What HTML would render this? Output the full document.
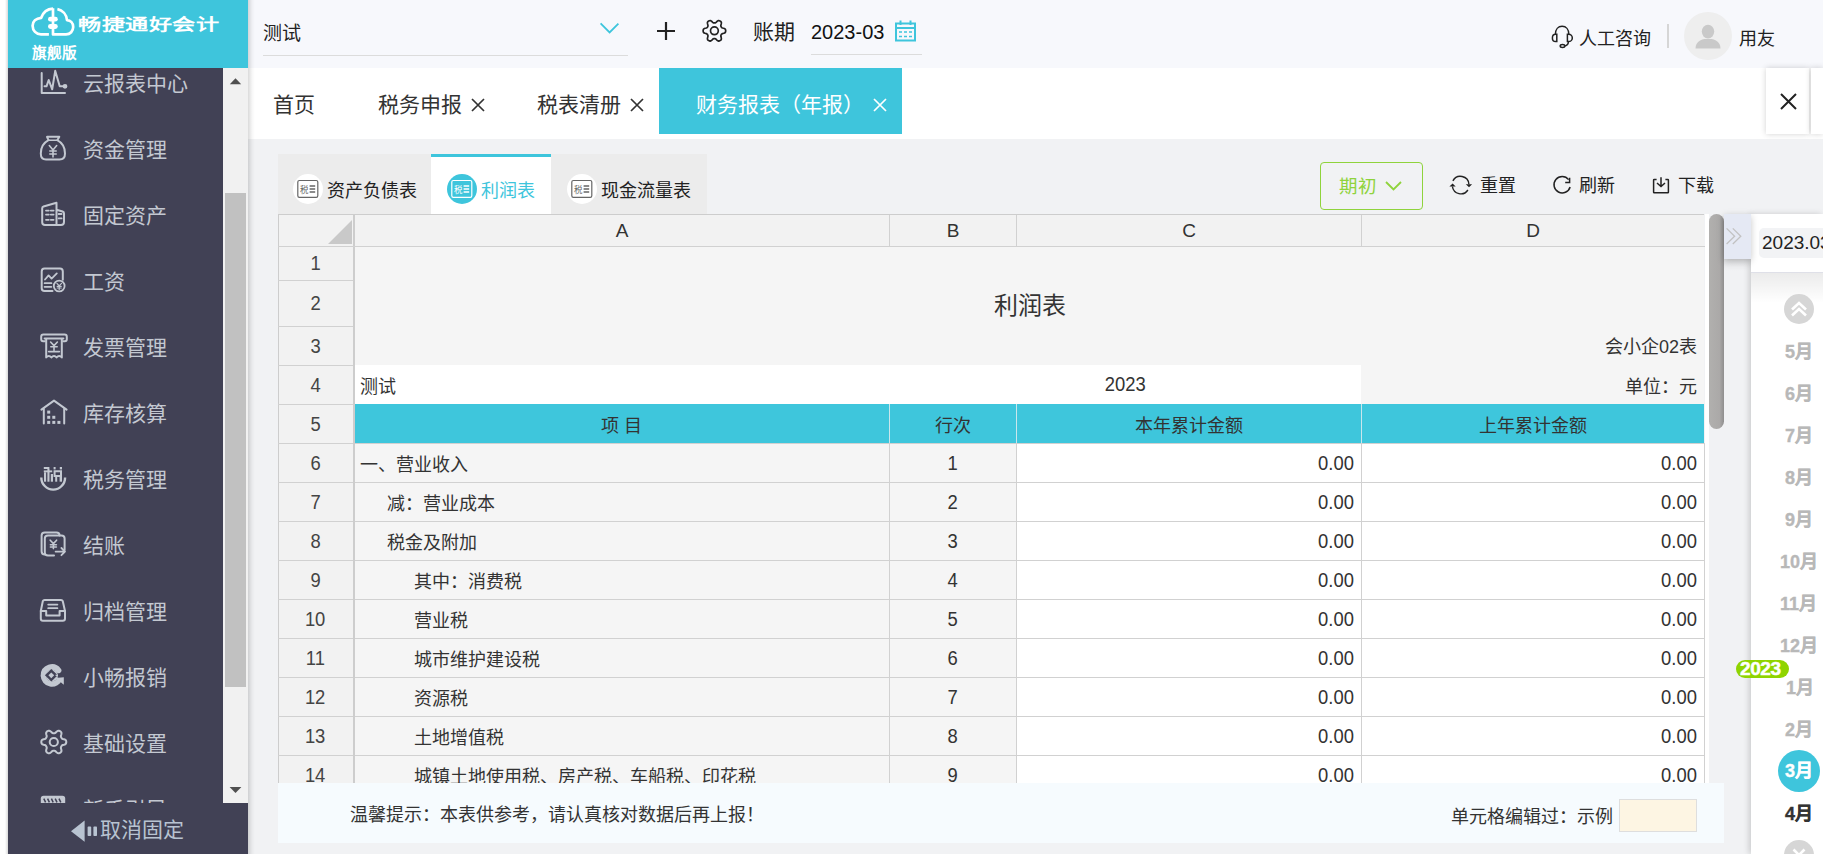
<!DOCTYPE html>
<html lang="zh-CN"><head><meta charset="utf-8">
<style>
*{box-sizing:border-box;margin:0;padding:0}
html,body{width:1823px;height:854px;overflow:hidden;background:#fff;font-family:"Liberation Sans",sans-serif;color:#333}
.abs,.g,.t,.ch,.rn,.hl,.vl{position:absolute}
.t{white-space:nowrap;color:#333}
.num{display:inline-block;font-size:20px;transform:scaleX(.92);position:relative;top:-2px}
.ch{text-align:center;line-height:32px;font-size:19px;color:#333}
.rn{left:278px;width:75px;text-align:center;font-size:18px;color:#444}
.hl{height:1px;background:#d1d1d1}
.vl{width:1px;background:#d1d1d1}
#strip{left:0;top:0;width:8px;height:854px;background:linear-gradient(90deg,#fff 0,#fff 5px,#e6e6e6 7px,#d9d9d9 8px)}
#logo{left:8px;top:0;width:240px;height:68px;background:#3ec5dc}
#side{left:8px;top:68px;width:240px;height:786px;background:#414155}
#sbtrack{left:223px;top:68px;width:25px;height:735px;background:#f1f1f1}
#sbthumb{left:225px;top:193px;width:21px;height:494px;background:#c1c1c1}
.mt{position:absolute;left:83px;font-size:21px;color:#c3c8d1;white-space:nowrap;line-height:32px}
#topbar{left:248px;top:0;width:1575px;height:68px;background:#f7f8fc}
#tabbar{left:248px;top:68px;width:1575px;height:71px;background:#fff}
#content{left:248px;top:139px;width:1575px;height:715px;background:#f1f2f4}
.mo{position:absolute;font-size:18px;font-weight:bold;line-height:28px;color:#b8b8b8;white-space:nowrap;-webkit-text-stroke:0.35px currentColor}
.tab{position:absolute;top:90px;line-height:30px;font-size:21px;color:#333;white-space:nowrap}
</style></head><body>
<div id="strip" class="abs"></div>
<div id="topbar" class="abs"></div>
<div id="tabbar" class="abs"></div>
<div id="content" class="abs"></div>
<div class="abs" style="left:248px;top:0;width:7px;height:854px;background:linear-gradient(90deg,rgba(0,0,0,0.14),rgba(0,0,0,0.03) 60%,rgba(0,0,0,0))"></div>

<!-- logo -->
<div id="logo" class="abs"></div>
<svg class="abs" style="left:0;top:0" width="248" height="68">
 <g fill="none" stroke="#fff" stroke-width="2.7" stroke-linejoin="round">
  <path d="M48.9 34.4 H41 C36.2 34.4 32.6 30.4 32.6 25.8 C32.6 21.4 36 18.2 41.2 17.8 C43.2 12 47.6 8.9 53 8.6"/>
  <path d="M53 8.2 V34.4 H66 C70.2 34.4 73.2 31 73.2 27 C73.2 23.2 70.6 20.5 67 20.2 C66.4 14.4 62.6 10.2 57.4 9.2"/>
 </g>
 <rect x="48" y="16.7" width="9.8" height="4.9" rx="2.45" fill="#fff"/>
 <rect x="48" y="24" width="9.8" height="4.9" rx="2.45" fill="#fff"/>
 <text x="78.4" y="44.4" fill="#fff" font-size="23" font-weight="bold" textLength="141" lengthAdjust="spacingAndGlyphs" transform="scale(1,0.68)" style="font-family:'Liberation Sans',sans-serif">畅捷通好会计</text>
 <text x="31.6" y="57.6" fill="#fff" font-size="14.6" font-weight="bold" style="font-family:'Liberation Sans',sans-serif">旗舰版</text>
</svg>

<!-- sidebar -->
<div id="side" class="abs"></div>
<svg class="abs" style="left:0;top:68px" width="223" height="735" viewBox="0 68 223 735">
 <g fill="none" stroke="#c3c8d1" stroke-width="2" stroke-linecap="round" stroke-linejoin="round">
  <!-- chart -->
  <path d="M41.7 73 V93 H65"/>
  <path d="M44.5 86.3 H46.5 L48.7 80 L52.2 89.3 L55.2 70.8 L59.7 86.3 H63.5"/>
  <circle cx="65" cy="86.3" r="1.4" fill="#c3c8d1"/>
  <!-- money bag -->
  <path d="M47 136.8 H59.3 L57.3 140.2 C62.5 143 65 148.5 65 153.5 C65 157.5 63 159.5 59.5 159.5 H46 C42.5 159.5 40.8 157.5 40.8 153.5 C40.8 148.5 43.3 143 48.5 140.2 Z"/>
  <path d="M48.5 140.2 H57.3" stroke-width="1.6"/>
  <path d="M49.3 145.5 L53 150 L56.7 145.5 M53 150 V157 M49.8 151 H56.2 M49.8 154 H56.2" stroke-width="1.6"/>
  <!-- building -->
  <path d="M56.5 202.8 L43.5 206.5 Q42.2 206.9 42.2 208.2 V222.2 Q42.2 225 45 225 H61 Q64 225 64 222 V213.5 Q64 212 62.6 211.5 L56.5 209.8 M56.5 202.8 V225"/>
  <path d="M46 210.6 H48.8 M50.8 210.6 H53.6 M46 214.6 H48.8 M50.8 214.6 H53.6 M46 219.8 H48.8 M50.8 219.8 H53.6 M58.6 214 H61.6 M58.6 218.4 H61.6" stroke-width="1.8"/>
  <!-- salary doc -->
  <path d="M52.5 291 H44.5 Q41.7 291 41.7 288.2 V271.4 Q41.7 268.6 44.5 268.6 H60 Q62.8 268.6 62.8 271.4 V279.8"/>
  <path d="M45 279.5 L48.6 275.4 L51.6 278.6 L56.8 273.4" stroke-width="1.8"/>
  <path d="M44.6 283.2 H51.4 M44.6 286.8 H51.4" stroke-width="1.8"/>
  <circle cx="59.2" cy="286" r="5.4" stroke-width="1.8"/>
  <path d="M56.9 283.4 L59.2 285.8 L61.5 283.4 M59.2 285.8 V289.4 M57.2 286.4 H61.2 M57.2 288 H61.2" stroke-width="1.2"/>
  <!-- invoice -->
  <path d="M44.8 341.2 H43.2 Q41.2 341.2 41.2 339.2 V336.8 Q41.2 334.6 43.4 334.6 H64.6 Q66.8 334.6 66.8 336.8 V339.2 Q66.8 341.2 64.8 341.2 H63.2"/>
  <path d="M44.6 338.4 H63.4 M46.2 338.4 V357.4 Q48.8 354.4 51.4 357.4 Q54 354.4 56.6 357.4 Q59.2 354.4 61.8 357.4 V338.4"/>
  <path d="M50.6 342 L54 345.6 L57.4 342 M54 345.6 V350.2 M50.8 346.8 H57.2 M48.6 351.6 H59.4" stroke-width="1.6"/>
  <!-- house -->
  <path d="M41.4 409.6 L54 400.6 L66.6 409.6 M43.8 408 V423.4 M64.2 408 V423.4"/>
  <g fill="#c3c8d1" stroke="none">
   <rect x="47.2" y="410.6" width="3" height="3"/><rect x="47.2" y="415.8" width="3" height="3"/><rect x="52.3" y="415.8" width="3" height="3"/>
   <rect x="47.2" y="420.9" width="3" height="3"/><rect x="52.3" y="420.9" width="3" height="3"/><rect x="57.4" y="420.9" width="3" height="3"/>
  </g>
  <!-- tax -->
  <path d="M41.3 477.4 A11.9 12.2 0 0 0 65.1 477.4" stroke-width="2.4" stroke-linecap="butt"/>
  <!-- checkout -->
  <path d="M44.8 554.4 Q41.6 554.4 41.6 551.2 V535.4 Q41.6 532.4 44.8 532.4 H56.4 Q59.6 532.4 59.6 535.4"/>
  <path d="M64.6 550 V538.6 Q64.6 535.6 61.4 535.6 H48 Q44.8 535.6 44.8 538.6 V552.4 Q44.8 555.4 48 555.4 H54"/>
  <path d="M50.2 540.2 L53.4 543.6 L56.6 540.2 M53.4 543.6 V548.6 M50.4 544.8 H56.4 M50.4 547 H56.4" stroke-width="1.6"/>
  <path d="M55.6 551.6 H65 M61.4 548 L65 551.6 L61.4 555.2" stroke-width="1.8"/>
  <!-- archive -->
  <path d="M44.6 600 H61 Q62.3 600 62.8 601.2 L65 611 V618.6 Q65 620.8 62.8 620.8 H42.8 Q40.8 620.8 40.8 618.6 V611 L42.8 601.2 Q43.3 600 44.6 600 Z"/>
  <path d="M40.8 611 H46.2 V615.4 H59.6 V611 H65"/>
  <path d="M48.2 604.6 H57.4 M48.2 608.2 H57.4" stroke-width="1.8"/>
  <!-- small C logo -->
  <path d="M58.6 670.4 A8.4 8.4 0 0 0 43.5 675.5" stroke-width="5.6" stroke-linecap="round"/>
  <path d="M43.5 675.5 A8.4 8.4 0 0 0 59.8 678.4" stroke-width="5.6" stroke-linecap="butt"/>
  <g stroke="none">
   <circle cx="51.9" cy="675.5" r="6" fill="#c3c8d1"/>
   <path d="M51.3 669.1 L57.7 675.3 L51.3 681.5 L44.9 675.3 Z" fill="#414155"/>
   <path d="M51.3 672.4 L54.2 675.3 L51.3 678.2 L48.4 675.3 Z" fill="#c3c8d1"/>
   <path d="M55.6 678 L63.8 677.2 L63.8 684.8 Z" fill="#c3c8d1"/>
   <rect x="55.6" y="674.6" width="2.4" height="1.4" fill="#c3c8d1"/>
  </g>
  <!-- gear -->
  <path d="M66.3 742.0 L66.2 742.8 L66.0 743.6 L65.3 744.3 L64.0 744.7 L62.8 745.0 L62.0 745.4 L61.6 745.9 L61.3 746.4 L61.1 746.9 L60.9 747.4 L60.9 748.2 L61.3 749.5 L61.5 750.8 L61.3 751.7 L60.7 752.4 L60.0 752.8 L59.3 753.2 L58.5 753.3 L57.6 753.1 L56.5 752.2 L55.6 751.3 L55.0 750.9 L54.4 750.7 L53.8 750.7 L53.2 750.7 L52.6 750.9 L52.0 751.3 L51.1 752.2 L50.0 753.1 L49.1 753.3 L48.3 753.2 L47.5 752.8 L46.9 752.4 L46.3 751.7 L46.1 750.8 L46.3 749.5 L46.7 748.2 L46.7 747.4 L46.5 746.9 L46.3 746.4 L46.0 745.9 L45.6 745.4 L44.8 745.0 L43.6 744.7 L42.3 744.3 L41.6 743.6 L41.4 742.8 L41.3 742.0 L41.4 741.2 L41.6 740.4 L42.3 739.7 L43.6 739.3 L44.8 739.0 L45.6 738.6 L46.0 738.1 L46.3 737.6 L46.5 737.1 L46.7 736.6 L46.7 735.8 L46.3 734.5 L46.1 733.2 L46.3 732.3 L46.9 731.6 L47.5 731.2 L48.3 730.8 L49.1 730.7 L50.0 730.9 L51.1 731.8 L52.0 732.7 L52.6 733.1 L53.2 733.3 L53.8 733.3 L54.4 733.3 L55.0 733.1 L55.6 732.7 L56.5 731.8 L57.6 730.9 L58.5 730.7 L59.3 730.8 L60.0 731.2 L60.7 731.6 L61.3 732.3 L61.5 733.2 L61.3 734.5 L60.9 735.8 L60.9 736.6 L61.1 737.1 L61.3 737.6 L61.6 738.1 L62.0 738.6 L62.8 739.0 L64.0 739.3 L65.3 739.7 L66.0 740.4 L66.2 741.2Z" stroke-width="2"/>
  <circle cx="53.8" cy="742" r="4.1" stroke-width="2"/>
  <!-- guide (clipped) -->
  <path d="M40.8 803 V798.6 Q40.8 795.8 43.6 795.8 H62.4 Q65.2 795.8 65.2 798.6 V803 Z" fill="#c3c8d1" stroke="none"/>
  <path d="M43.8 798.6 L45.6 802.4 M47.6 798.6 L49.4 802.4 M51.4 798.6 L53.2 802.4 M55.2 798.6 L57 802.4 M59 798.6 L60.8 802.4" stroke="#414155" stroke-width="1.5" stroke-linecap="butt"/>
 </g>
 <g fill="#c3c8d1">
  <rect x="43.8" y="467" width="5.6" height="2"/>
  <rect x="43.8" y="470.4" width="8.4" height="1.9"/>
  <rect x="44" y="472.3" width="2.1" height="9.4"/>
  <rect x="47.4" y="469" width="2.1" height="12.7"/>
  <rect x="50.8" y="474" width="2.2" height="7.7"/>
  <rect x="53.6" y="467" width="2" height="2.4"/>
  <rect x="59.8" y="467" width="2.2" height="2.4"/>
  <path d="M53.6 470.2 H62 V477 H53.6 Z M55.6 472.2 V475 H60 V472.2 Z" fill-rule="evenodd"/>
  <rect x="55.2" y="477" width="2" height="4.7"/>
  <rect x="59.6" y="477" width="2.4" height="4.7"/>
 </g>
</svg>
<div class="mt" style="top:68px;height:735px;left:0;width:223px;overflow:hidden">
 <div class="mt" style="top:0px">云报表中心</div>
 <div class="mt" style="top:66px">资金管理</div>
 <div class="mt" style="top:132px">固定资产</div>
 <div class="mt" style="top:198px">工资</div>
 <div class="mt" style="top:264px">发票管理</div>
 <div class="mt" style="top:330px">库存核算</div>
 <div class="mt" style="top:396px">税务管理</div>
 <div class="mt" style="top:462px">结账</div>
 <div class="mt" style="top:528px">归档管理</div>
 <div class="mt" style="top:594px">小畅报销</div>
 <div class="mt" style="top:660px">基础设置</div>
 <div class="mt" style="top:726px">新手引导</div>
</div>
<div id="sbtrack" class="abs"></div>
<div id="sbthumb" class="abs"></div>
<svg class="abs" style="left:223px;top:68px" width="25" height="735">
 <path d="M6.8 16.2 L12.5 10.2 L18.2 16.2Z" fill="#505050"/>
 <path d="M6.6 718.9 L12.5 725 L18.4 718.9Z" fill="#505050"/>
</svg>
<!-- unpin -->
<svg class="abs" style="left:0;top:803px" width="248" height="51">
 <path d="M71 28.2 L84.6 17.6 V38.8 Z" fill="#b8c3d1"/>
 <rect x="87.6" y="23.6" width="3.6" height="9.4" rx="0.8" fill="#b8c3d1"/>
 <rect x="93.4" y="23.6" width="3.6" height="9.4" rx="0.8" fill="#b8c3d1"/>
</svg>
<div class="t" style="left:100px;top:815px;font-size:21px;line-height:30px;color:#b8c3d1">取消固定</div>

<!-- top bar -->
<div class="t" style="left:263px;top:18.5px;font-size:19px;line-height:30px;color:#222">测试</div>
<div class="abs" style="left:263px;top:55px;width:365px;height:1px;background:#dcdcdc"></div>
<svg class="abs" style="left:596px;top:18px" width="28" height="20"><path d="M4.6 5.4 L13.6 14.4 L22.4 5.6" fill="none" stroke="#3ec5dc" stroke-width="1.8"/></svg>
<svg class="abs" style="left:650px;top:15px" width="32" height="32"><path d="M16 7 V25 M7 16 H25" stroke="#222" stroke-width="2.2"/></svg>
<svg class="abs" style="left:698px;top:15px" width="32" height="32">
 <path d="M27.7 15.8 L27.6 16.5 L27.4 17.2 L26.8 17.9 L25.7 18.3 L24.5 18.6 L23.9 18.9 L23.5 19.3 L23.2 19.8 L23.0 20.2 L22.8 20.7 L22.9 21.5 L23.2 22.6 L23.4 23.8 L23.2 24.6 L22.7 25.2 L22.0 25.6 L21.4 25.9 L20.6 26.1 L19.8 25.8 L18.9 25.1 L18.1 24.2 L17.5 23.8 L16.9 23.7 L16.4 23.7 L15.9 23.7 L15.3 23.8 L14.7 24.2 L13.9 25.1 L13.0 25.8 L12.2 26.1 L11.4 25.9 L10.8 25.6 L10.1 25.2 L9.6 24.6 L9.4 23.8 L9.6 22.6 L9.9 21.5 L10.0 20.7 L9.8 20.2 L9.6 19.8 L9.3 19.3 L8.9 18.9 L8.3 18.6 L7.1 18.3 L6.0 17.9 L5.4 17.2 L5.2 16.5 L5.1 15.8 L5.2 15.1 L5.4 14.4 L6.0 13.7 L7.1 13.3 L8.3 13.0 L8.9 12.7 L9.3 12.3 L9.6 11.9 L9.8 11.4 L10.0 10.9 L9.9 10.1 L9.6 9.0 L9.4 7.8 L9.6 7.0 L10.1 6.4 L10.7 6.0 L11.4 5.7 L12.2 5.5 L13.0 5.8 L13.9 6.5 L14.7 7.4 L15.3 7.8 L15.9 7.9 L16.4 7.9 L16.9 7.9 L17.5 7.8 L18.1 7.4 L18.9 6.5 L19.8 5.8 L20.6 5.5 L21.4 5.7 L22.0 6.0 L22.7 6.4 L23.2 7.0 L23.4 7.8 L23.2 9.0 L22.9 10.1 L22.8 10.9 L23.0 11.4 L23.2 11.8 L23.5 12.3 L23.9 12.7 L24.5 13.0 L25.7 13.3 L26.8 13.7 L27.4 14.4 L27.6 15.1Z" fill="none" stroke="#222" stroke-width="1.7" stroke-linejoin="round"/>
 <circle cx="16.4" cy="15.8" r="3.9" fill="none" stroke="#222" stroke-width="1.7"/>
</svg>
<div class="t" style="left:753px;top:17px;font-size:21px;line-height:30px;color:#222">账期</div>
<div class="t" style="left:811px;top:17px;font-size:20px;line-height:30px;color:#111">2023-03</div>
<div class="abs" style="left:811px;top:54px;width:111px;height:1px;background:#dcdcdc"></div>
<svg class="abs" style="left:892px;top:17px" width="28" height="28">
 <g fill="none" stroke="#3ec5dc" stroke-width="2">
  <rect x="4" y="6.5" width="19" height="17" />
  <path d="M4 11 H23 M8.5 3.5 V8 M18.5 3.5 V8"/>
  <path d="M7 15 H10 M12 15 H15 M17 15 H20 M7 19.5 H10 M12 19.5 H15 M17 19.5 H20" stroke-width="1.6"/>
 </g>
</svg>
<svg class="abs" style="left:1548px;top:22px" width="28" height="30">
 <g fill="none" stroke="#222" stroke-width="1.5">
  <path d="M7.4 12.3 C7.4 7.4 10.2 4.3 14.1 4.3 C18 4.3 20.8 7.4 20.8 12.3"/>
  <path d="M8.8 12.3 H7.6 C5.6 12.3 4.4 14 4.4 15.9 C4.4 17.8 5.6 19.5 7.6 19.5 H8.8 Z"/>
  <path d="M19.4 12.3 H20.6 C22.6 12.3 24.3 14 24.3 15.9 C24.3 17.8 22.6 19.5 20.6 19.5 H19.4 Z"/>
  <path d="M20.4 19.6 C20.4 22 19 23.6 16.8 23.9"/>
  <ellipse cx="14.5" cy="23.9" rx="2.3" ry="1.5"/>
 </g>
</svg>
<div class="t" style="left:1579px;top:23.5px;font-size:18px;line-height:30px;color:#222">人工咨询</div>
<div class="abs" style="left:1667px;top:24px;width:2px;height:24px;background:#d6d6d6"></div>
<div class="abs" style="left:1684px;top:12px;width:48px;height:48px;border-radius:50%;background:#eeeeee"></div>
<svg class="abs" style="left:1684px;top:12px" width="48" height="48">
 <ellipse cx="24" cy="19.6" rx="6.2" ry="6.8" fill="#c9c9c9"/>
 <path d="M11.5 36.5 C11.5 30 17 27.4 20.5 27 H27.5 C31 27.4 36.5 30 36.5 36.5 Z" fill="#c9c9c9"/>
</svg>
<div class="t" style="left:1739px;top:23.5px;font-size:18px;line-height:30px;color:#222">用友</div>

<!-- tabs -->
<div class="tab" style="left:273px">首页</div>
<div class="tab" style="left:378px">税务申报</div>
<svg class="abs" style="left:470px;top:97px" width="16" height="16"><path d="M2 2 L14 14 M14 2 L2 14" stroke="#333" stroke-width="1.7"/></svg>
<div class="tab" style="left:537px">税表清册</div>
<svg class="abs" style="left:629px;top:97px" width="16" height="16"><path d="M2 2 L14 14 M14 2 L2 14" stroke="#333" stroke-width="1.7"/></svg>
<div class="abs" style="left:659px;top:68px;width:243px;height:66px;background:#3ec5dc"></div>
<div class="tab" style="left:696px;color:#fff">财务报表（年报）</div>
<svg class="abs" style="left:872px;top:97px" width="16" height="16"><path d="M2 2 L14 14 M14 2 L2 14" stroke="#fff" stroke-width="1.7"/></svg>
<div class="abs" style="left:1766px;top:68px;width:43px;height:66px;background:#fff;box-shadow:0 0 6px rgba(0,0,0,0.18)"></div>
<div class="abs" style="left:1811px;top:68px;width:12px;height:66px;background:#fff;box-shadow:0 0 6px rgba(0,0,0,0.18)"></div>
<svg class="abs" style="left:1777px;top:90px" width="24" height="24"><path d="M4 4 L19 19 M19 4 L4 19" stroke="#222" stroke-width="2"/></svg>

<!-- sheet tabs -->
<div class="abs" style="left:278px;top:154px;width:429px;height:60px;background:#ececec"></div>
<div class="abs" style="left:431px;top:154px;width:120px;height:60px;background:#fff;border-top:3px solid #3ec5dc"></div>
<svg class="abs" style="left:292px;top:173px" width="32" height="32">
 <circle cx="16" cy="16" r="15" fill="#fff"/>
 <rect x="5.8" y="7.5" width="20" height="16.8" rx="1.6" fill="none" stroke="#666" stroke-width="1.2"/>
 <text x="7.8" y="20.2" font-size="9" fill="#666" textLength="8.4" lengthAdjust="spacingAndGlyphs">税</text>
 <path d="M17.6 13 H23.2 M17.6 16 H23.2 M17.6 19 H23.2" stroke="#666" stroke-width="1.3"/>
</svg>
<div class="t" style="left:327px;top:177px;font-size:18px;line-height:28px;color:#222">资产负债表</div>
<svg class="abs" style="left:446px;top:173px" width="32" height="32">
 <circle cx="16" cy="16" r="15" fill="#3ec5dc"/>
 <rect x="5.8" y="7.5" width="20" height="16.8" rx="1.6" fill="none" stroke="#fff" stroke-width="1.2"/>
 <text x="7.8" y="20.2" font-size="9" fill="#fff" textLength="8.4" lengthAdjust="spacingAndGlyphs">税</text>
 <path d="M17.6 13 H23.2 M17.6 16 H23.2 M17.6 19 H23.2" stroke="#fff" stroke-width="1.3"/>
</svg>
<div class="t" style="left:481px;top:177px;font-size:18px;line-height:28px;color:#3ec5dc">利润表</div>
<svg class="abs" style="left:566px;top:173px" width="32" height="32">
 <circle cx="16" cy="16" r="15" fill="#fff"/>
 <rect x="5.8" y="7.5" width="20" height="16.8" rx="1.6" fill="none" stroke="#666" stroke-width="1.2"/>
 <text x="7.8" y="20.2" font-size="9" fill="#666" textLength="8.4" lengthAdjust="spacingAndGlyphs">税</text>
 <path d="M17.6 13 H23.2 M17.6 16 H23.2 M17.6 19 H23.2" stroke="#666" stroke-width="1.3"/>
</svg>
<div class="t" style="left:601px;top:177px;font-size:18px;line-height:28px;color:#222">现金流量表</div>

<!-- toolbar -->
<div class="abs" style="left:1320px;top:162px;width:103px;height:48px;border:1.5px solid #8fd33c;border-radius:4px;background:#f1f2f4"></div>
<div class="t" style="left:1339px;top:173px;font-size:18.5px;line-height:28px;color:#8fd33c">期初</div>
<svg class="abs" style="left:1383px;top:176px" width="22" height="20"><path d="M3 6 L10.5 13.5 L18 6" fill="none" stroke="#8fd33c" stroke-width="1.8"/></svg>
<svg class="abs" style="left:1440px;top:165px" width="40" height="40">
 <g fill="none" stroke="#222" stroke-width="1.4">
  <path d="M12.9 15.9 A8.5 8.5 0 0 1 28.9 19.2"/>
  <path d="M27.9 25 A8.5 8.5 0 0 1 12.4 21.5"/>
 </g>
 <path d="M25.8 19.2 H32.1 L29 22.2 Z" fill="#222"/>
 <path d="M9.4 21.6 H15.7 L12.6 18.6 Z" fill="#222"/>
</svg>
<div class="t" style="left:1480px;top:172px;font-size:18px;line-height:28px;color:#222">重置</div>
<svg class="abs" style="left:1545px;top:165px" width="40" height="40">
 <path d="M23.6 14.6 A8.2 8.2 0 1 0 25.1 22" fill="none" stroke="#222" stroke-width="1.5"/>
 <path d="M24.6 12.8 V17.4 H20.2" fill="none" stroke="#222" stroke-width="1.5"/>
</svg>
<div class="t" style="left:1579px;top:172px;font-size:18px;line-height:28px;color:#222">刷新</div>
<svg class="abs" style="left:1645px;top:165px" width="40" height="40">
 <g fill="none" stroke="#222" stroke-width="1.5">
  <path d="M11.6 14.4 H9.2 Q8.6 14.4 8.6 15 V27.2 Q8.6 27.8 9.2 27.8 H22.8 Q23.4 27.8 23.4 27.2 V15 Q23.4 14.4 22.8 14.4 H20.4"/>
  <path d="M16 12.2 V21.3 M12 18 L16 21.6 L20 18"/>
 </g>
</svg>
<div class="t" style="left:1678px;top:172px;font-size:18px;line-height:28px;color:#222">下载</div>

<!-- grid -->
<div class="g" style="left:278px;top:214px;width:1426px;height:33px;background:#f2f2f2;border:1px solid #cdcdcd;border-right:none"></div>
<div class="ch" style="left:355px;top:215px;width:534px;height:31px">A</div>
<div class="ch" style="left:890px;top:215px;width:126px;height:31px">B</div>
<div class="ch" style="left:1017px;top:215px;width:344px;height:31px">C</div>
<div class="ch" style="left:1362px;top:215px;width:342px;height:31px">D</div>
<div class="vl" style="left:889px;top:215px;height:31px"></div>
<div class="vl" style="left:1016px;top:215px;height:31px"></div>
<div class="vl" style="left:1361px;top:215px;height:31px"></div>
<svg class="g" style="left:328px;top:220px" width="24" height="24"><path d="M0 24 L24 0 L24 24Z" fill="#c9c9c9"/></svg>
<div class="g" style="left:278px;top:246px;width:77px;height:540px;background:#f2f2f2;border-left:1px solid #cdcdcd"></div>
<div class="g" style="left:353px;top:214px;width:2px;height:570px;background:#cdcdcd"></div>
<div class="rn" style="top:249px;height:33px;line-height:33px"><span class="num" style="transform-origin:center">1</span></div>
<div class="hl" style="left:278px;top:280px;width:75px"></div>
<div class="rn" style="top:283px;height:45px;line-height:45px"><span class="num" style="transform-origin:center">2</span></div>
<div class="hl" style="left:278px;top:326px;width:75px"></div>
<div class="rn" style="top:329px;height:38px;line-height:38px"><span class="num" style="transform-origin:center">3</span></div>
<div class="hl" style="left:278px;top:365px;width:75px"></div>
<div class="rn" style="top:368px;height:38px;line-height:38px"><span class="num" style="transform-origin:center">4</span></div>
<div class="hl" style="left:278px;top:404px;width:75px"></div>
<div class="rn" style="top:407px;height:38px;line-height:38px"><span class="num" style="transform-origin:center">5</span></div>
<div class="hl" style="left:278px;top:443px;width:75px"></div>
<div class="rn" style="top:446px;height:38px;line-height:38px"><span class="num" style="transform-origin:center">6</span></div>
<div class="hl" style="left:278px;top:482px;width:75px"></div>
<div class="rn" style="top:485px;height:38px;line-height:38px"><span class="num" style="transform-origin:center">7</span></div>
<div class="hl" style="left:278px;top:521px;width:75px"></div>
<div class="rn" style="top:524px;height:38px;line-height:38px"><span class="num" style="transform-origin:center">8</span></div>
<div class="hl" style="left:278px;top:560px;width:75px"></div>
<div class="rn" style="top:563px;height:38px;line-height:38px"><span class="num" style="transform-origin:center">9</span></div>
<div class="hl" style="left:278px;top:599px;width:75px"></div>
<div class="rn" style="top:602px;height:38px;line-height:38px"><span class="num" style="transform-origin:center">10</span></div>
<div class="hl" style="left:278px;top:638px;width:75px"></div>
<div class="rn" style="top:641px;height:38px;line-height:38px"><span class="num" style="transform-origin:center">11</span></div>
<div class="hl" style="left:278px;top:677px;width:75px"></div>
<div class="rn" style="top:680px;height:38px;line-height:38px"><span class="num" style="transform-origin:center">12</span></div>
<div class="hl" style="left:278px;top:716px;width:75px"></div>
<div class="rn" style="top:719px;height:38px;line-height:38px"><span class="num" style="transform-origin:center">13</span></div>
<div class="hl" style="left:278px;top:755px;width:75px"></div>
<div class="rn" style="top:758px;height:38px;line-height:38px"><span class="num" style="transform-origin:center">14</span></div>
<div class="hl" style="left:278px;top:794px;width:75px"></div>
<div class="hl" style="left:278px;top:246px;width:1427px"></div>
<div class="g" style="left:355px;top:247px;width:1349px;height:118px;background:#f5f5f5"></div>
<div class="t" style="left:355px;top:281px;width:1349px;height:45px;line-height:50px;text-align:center;font-size:24px">利润表</div>
<div class="t" style="left:1362px;top:327px;width:335px;height:38px;line-height:41px;text-align:right;font-size:18px">会小企02表</div>
<div class="g" style="left:355px;top:365px;width:1006px;height:39px;background:#fff"></div>
<div class="g" style="left:1361px;top:365px;width:343px;height:39px;background:#f5f5f5"></div>
<div class="t" style="left:360px;top:365px;height:39px;line-height:44px;font-size:18px">测试</div>
<div class="t" style="left:889px;top:365px;width:472px;height:39px;line-height:42px;text-align:center;font-size:18px"><span class="num" style="transform-origin:center">2023</span></div>
<div class="t" style="left:1362px;top:365px;width:335px;height:39px;line-height:44px;text-align:right;font-size:18px">单位：元</div>
<div class="g" style="left:355px;top:404px;width:1349px;height:39px;background:#3ec6dc"></div>
<div class="t" style="left:355px;top:404px;width:534px;height:39px;line-height:44px;text-align:center;font-size:18px">项 目</div>
<div class="t" style="left:890px;top:404px;width:126px;height:39px;line-height:44px;text-align:center;font-size:18px">行次</div>
<div class="t" style="left:1017px;top:404px;width:344px;height:39px;line-height:44px;text-align:center;font-size:18px">本年累计金额</div>
<div class="t" style="left:1362px;top:404px;width:342px;height:39px;line-height:44px;text-align:center;font-size:18px">上年累计金额</div>
<div class="vl" style="left:889px;top:404px;height:39px;background:#c9e6ec"></div>
<div class="vl" style="left:1016px;top:404px;height:39px;background:#c9e6ec"></div>
<div class="vl" style="left:1361px;top:404px;height:39px;background:#c9e6ec"></div>
<div class="g" style="left:355px;top:444px;width:534px;height:39px;background:#f5f5f5"></div>
<div class="g" style="left:890px;top:444px;width:126px;height:39px;background:#f5f5f5"></div>
<div class="g" style="left:1017px;top:444px;width:344px;height:39px;background:#fff"></div>
<div class="g" style="left:1362px;top:444px;width:342px;height:39px;background:#fff"></div>
<div class="t" style="left:360px;top:444px;height:38px;line-height:43px;font-size:18px">一、营业收入</div>
<div class="t" style="left:890px;top:444px;width:126px;height:38px;line-height:43px;text-align:center;font-size:18px"><span class="num" style="transform-origin:center">1</span></div>
<div class="t" style="left:1017px;top:444px;width:337px;height:38px;line-height:43px;text-align:right;font-size:18px"><span class="num" style="transform-origin:right">0.00</span></div>
<div class="t" style="left:1362px;top:444px;width:335px;height:38px;line-height:43px;text-align:right;font-size:18px"><span class="num" style="transform-origin:right">0.00</span></div>
<div class="hl" style="left:355px;top:443px;width:1349px"></div>
<div class="g" style="left:355px;top:483px;width:534px;height:39px;background:#f5f5f5"></div>
<div class="g" style="left:890px;top:483px;width:126px;height:39px;background:#f5f5f5"></div>
<div class="g" style="left:1017px;top:483px;width:344px;height:39px;background:#fff"></div>
<div class="g" style="left:1362px;top:483px;width:342px;height:39px;background:#fff"></div>
<div class="t" style="left:387px;top:483px;height:38px;line-height:43px;font-size:18px">减：营业成本</div>
<div class="t" style="left:890px;top:483px;width:126px;height:38px;line-height:43px;text-align:center;font-size:18px"><span class="num" style="transform-origin:center">2</span></div>
<div class="t" style="left:1017px;top:483px;width:337px;height:38px;line-height:43px;text-align:right;font-size:18px"><span class="num" style="transform-origin:right">0.00</span></div>
<div class="t" style="left:1362px;top:483px;width:335px;height:38px;line-height:43px;text-align:right;font-size:18px"><span class="num" style="transform-origin:right">0.00</span></div>
<div class="hl" style="left:355px;top:482px;width:1349px"></div>
<div class="g" style="left:355px;top:522px;width:534px;height:39px;background:#f5f5f5"></div>
<div class="g" style="left:890px;top:522px;width:126px;height:39px;background:#f5f5f5"></div>
<div class="g" style="left:1017px;top:522px;width:344px;height:39px;background:#fff"></div>
<div class="g" style="left:1362px;top:522px;width:342px;height:39px;background:#fff"></div>
<div class="t" style="left:387px;top:522px;height:38px;line-height:43px;font-size:18px">税金及附加</div>
<div class="t" style="left:890px;top:522px;width:126px;height:38px;line-height:43px;text-align:center;font-size:18px"><span class="num" style="transform-origin:center">3</span></div>
<div class="t" style="left:1017px;top:522px;width:337px;height:38px;line-height:43px;text-align:right;font-size:18px"><span class="num" style="transform-origin:right">0.00</span></div>
<div class="t" style="left:1362px;top:522px;width:335px;height:38px;line-height:43px;text-align:right;font-size:18px"><span class="num" style="transform-origin:right">0.00</span></div>
<div class="hl" style="left:355px;top:521px;width:1349px"></div>
<div class="g" style="left:355px;top:561px;width:534px;height:39px;background:#f5f5f5"></div>
<div class="g" style="left:890px;top:561px;width:126px;height:39px;background:#f5f5f5"></div>
<div class="g" style="left:1017px;top:561px;width:344px;height:39px;background:#fff"></div>
<div class="g" style="left:1362px;top:561px;width:342px;height:39px;background:#fff"></div>
<div class="t" style="left:414px;top:561px;height:38px;line-height:43px;font-size:18px">其中：消费税</div>
<div class="t" style="left:890px;top:561px;width:126px;height:38px;line-height:43px;text-align:center;font-size:18px"><span class="num" style="transform-origin:center">4</span></div>
<div class="t" style="left:1017px;top:561px;width:337px;height:38px;line-height:43px;text-align:right;font-size:18px"><span class="num" style="transform-origin:right">0.00</span></div>
<div class="t" style="left:1362px;top:561px;width:335px;height:38px;line-height:43px;text-align:right;font-size:18px"><span class="num" style="transform-origin:right">0.00</span></div>
<div class="hl" style="left:355px;top:560px;width:1349px"></div>
<div class="g" style="left:355px;top:600px;width:534px;height:39px;background:#f5f5f5"></div>
<div class="g" style="left:890px;top:600px;width:126px;height:39px;background:#f5f5f5"></div>
<div class="g" style="left:1017px;top:600px;width:344px;height:39px;background:#fff"></div>
<div class="g" style="left:1362px;top:600px;width:342px;height:39px;background:#fff"></div>
<div class="t" style="left:414px;top:600px;height:38px;line-height:43px;font-size:18px">营业税</div>
<div class="t" style="left:890px;top:600px;width:126px;height:38px;line-height:43px;text-align:center;font-size:18px"><span class="num" style="transform-origin:center">5</span></div>
<div class="t" style="left:1017px;top:600px;width:337px;height:38px;line-height:43px;text-align:right;font-size:18px"><span class="num" style="transform-origin:right">0.00</span></div>
<div class="t" style="left:1362px;top:600px;width:335px;height:38px;line-height:43px;text-align:right;font-size:18px"><span class="num" style="transform-origin:right">0.00</span></div>
<div class="hl" style="left:355px;top:599px;width:1349px"></div>
<div class="g" style="left:355px;top:639px;width:534px;height:39px;background:#f5f5f5"></div>
<div class="g" style="left:890px;top:639px;width:126px;height:39px;background:#f5f5f5"></div>
<div class="g" style="left:1017px;top:639px;width:344px;height:39px;background:#fff"></div>
<div class="g" style="left:1362px;top:639px;width:342px;height:39px;background:#fff"></div>
<div class="t" style="left:414px;top:639px;height:38px;line-height:43px;font-size:18px">城市维护建设税</div>
<div class="t" style="left:890px;top:639px;width:126px;height:38px;line-height:43px;text-align:center;font-size:18px"><span class="num" style="transform-origin:center">6</span></div>
<div class="t" style="left:1017px;top:639px;width:337px;height:38px;line-height:43px;text-align:right;font-size:18px"><span class="num" style="transform-origin:right">0.00</span></div>
<div class="t" style="left:1362px;top:639px;width:335px;height:38px;line-height:43px;text-align:right;font-size:18px"><span class="num" style="transform-origin:right">0.00</span></div>
<div class="hl" style="left:355px;top:638px;width:1349px"></div>
<div class="g" style="left:355px;top:678px;width:534px;height:39px;background:#f5f5f5"></div>
<div class="g" style="left:890px;top:678px;width:126px;height:39px;background:#f5f5f5"></div>
<div class="g" style="left:1017px;top:678px;width:344px;height:39px;background:#fff"></div>
<div class="g" style="left:1362px;top:678px;width:342px;height:39px;background:#fff"></div>
<div class="t" style="left:414px;top:678px;height:38px;line-height:43px;font-size:18px">资源税</div>
<div class="t" style="left:890px;top:678px;width:126px;height:38px;line-height:43px;text-align:center;font-size:18px"><span class="num" style="transform-origin:center">7</span></div>
<div class="t" style="left:1017px;top:678px;width:337px;height:38px;line-height:43px;text-align:right;font-size:18px"><span class="num" style="transform-origin:right">0.00</span></div>
<div class="t" style="left:1362px;top:678px;width:335px;height:38px;line-height:43px;text-align:right;font-size:18px"><span class="num" style="transform-origin:right">0.00</span></div>
<div class="hl" style="left:355px;top:677px;width:1349px"></div>
<div class="g" style="left:355px;top:717px;width:534px;height:39px;background:#f5f5f5"></div>
<div class="g" style="left:890px;top:717px;width:126px;height:39px;background:#f5f5f5"></div>
<div class="g" style="left:1017px;top:717px;width:344px;height:39px;background:#fff"></div>
<div class="g" style="left:1362px;top:717px;width:342px;height:39px;background:#fff"></div>
<div class="t" style="left:414px;top:717px;height:38px;line-height:43px;font-size:18px">土地增值税</div>
<div class="t" style="left:890px;top:717px;width:126px;height:38px;line-height:43px;text-align:center;font-size:18px"><span class="num" style="transform-origin:center">8</span></div>
<div class="t" style="left:1017px;top:717px;width:337px;height:38px;line-height:43px;text-align:right;font-size:18px"><span class="num" style="transform-origin:right">0.00</span></div>
<div class="t" style="left:1362px;top:717px;width:335px;height:38px;line-height:43px;text-align:right;font-size:18px"><span class="num" style="transform-origin:right">0.00</span></div>
<div class="hl" style="left:355px;top:716px;width:1349px"></div>
<div class="g" style="left:355px;top:756px;width:534px;height:39px;background:#f5f5f5"></div>
<div class="g" style="left:890px;top:756px;width:126px;height:39px;background:#f5f5f5"></div>
<div class="g" style="left:1017px;top:756px;width:344px;height:39px;background:#fff"></div>
<div class="g" style="left:1362px;top:756px;width:342px;height:39px;background:#fff"></div>
<div class="t" style="left:414px;top:756px;height:38px;line-height:43px;font-size:18px">城镇土地使用税、房产税、车船税、印花税</div>
<div class="t" style="left:890px;top:756px;width:126px;height:38px;line-height:43px;text-align:center;font-size:18px"><span class="num" style="transform-origin:center">9</span></div>
<div class="t" style="left:1017px;top:756px;width:337px;height:38px;line-height:43px;text-align:right;font-size:18px"><span class="num" style="transform-origin:right">0.00</span></div>
<div class="t" style="left:1362px;top:756px;width:335px;height:38px;line-height:43px;text-align:right;font-size:18px"><span class="num" style="transform-origin:right">0.00</span></div>
<div class="hl" style="left:355px;top:755px;width:1349px"></div>
<div class="hl" style="left:355px;top:794px;width:1349px"></div>
<div class="vl" style="left:889px;top:443px;height:345px"></div>
<div class="vl" style="left:1016px;top:443px;height:345px"></div>
<div class="vl" style="left:1361px;top:443px;height:345px"></div>
<div class="vl" style="left:1704px;top:443px;height:345px"></div>

<!-- footer -->
<div class="abs" style="left:278px;top:783px;width:1446px;height:60px;background:#f6fbfe"></div>
<div class="t" style="left:350px;top:800.5px;font-size:18px;line-height:28px;color:#333">温馨提示：本表供参考，请认真核对数据后再上报！</div>
<div class="t" style="left:1451px;top:803px;font-size:18px;line-height:28px;color:#333">单元格编辑过：示例</div>
<div class="abs" style="left:1619px;top:799px;width:78px;height:33px;background:#fdf5e3;border:1px solid #dedede"></div>

<!-- v scrollbar -->
<div class="abs" style="left:1705px;top:214px;width:4px;height:569px;background:#fff"></div>
<div class="abs" style="left:1709px;top:214px;width:15px;height:215px;border-radius:7.5px;background:linear-gradient(90deg,#b1b0ae 0%,#aba9a8 70%,#8f8e8e 100%)"></div>
<!-- right panel -->
<div class="abs" style="left:1724px;top:259px;width:27px;height:12px;background:linear-gradient(180deg,rgba(0,0,0,0.06),rgba(0,0,0,0))"></div>
<div class="abs" style="left:1751px;top:214px;width:72px;height:640px;background:#fff;box-shadow:-2px 0 6px rgba(0,0,0,0.16)"></div>
<div class="abs" style="left:1751px;top:272px;width:72px;height:1px;background:#dfe0e8"></div>
<div class="abs" style="left:1751px;top:273px;width:72px;height:30px;background:linear-gradient(180deg,rgba(0,0,0,0.08),rgba(0,0,0,0))"></div>
<div class="abs" style="left:1759px;top:228px;width:70px;height:30px;border-radius:5px;background:#f2f3f5"></div>
<div class="t" style="left:1762px;top:229px;font-size:19px;line-height:28px;color:#222">2023.03</div>
<div class="abs" style="left:1784px;top:294px;width:30px;height:30px;border-radius:50%;background:#d6d6d6"></div>
<svg class="abs" style="left:1784px;top:294px" width="30" height="30"><path d="M8 15.5 L15 9 L22 15.5 M8 21.5 L15 15 L22 21.5" fill="none" stroke="#fff" stroke-width="2.6"/></svg>
<div class="abs" style="left:1751px;top:0;width:72px;height:854px;overflow:hidden">
 <div class="mo" style="left:34px;top:338px">5月</div>
 <div class="mo" style="left:34px;top:380px">6月</div>
 <div class="mo" style="left:34px;top:422px">7月</div>
 <div class="mo" style="left:34px;top:464px">8月</div>
 <div class="mo" style="left:34px;top:506px">9月</div>
 <div class="mo" style="left:29px;top:548px">10月</div>
 <div class="mo" style="left:29px;top:590px">11月</div>
 <div class="mo" style="left:29px;top:632px">12月</div>
 <div class="mo" style="left:35px;top:674px">1月</div>
 <div class="mo" style="left:34px;top:716px">2月</div>
 <div class="abs" style="left:27px;top:750px;width:42px;height:42px;border-radius:50%;background:#3ec5dc"></div>
 <div class="mo" style="left:34px;top:757px;color:#fff">3月</div>
 <div class="mo" style="left:34px;top:800px;color:#333">4月</div>
 <div class="abs" style="left:33px;top:840px;width:30px;height:30px;border-radius:50%;background:#d6d6d6"></div>
 <svg class="abs" style="left:33px;top:840px" width="30" height="30"><path d="M9.5 9.5 L20.5 20.5 M20.5 9.5 L9.5 20.5" stroke="#fff" stroke-width="2.6"/></svg>
</div>
<!-- expand btn -->
<div class="abs" style="left:1724px;top:214px;width:27px;height:45px;background:#e5e9f4;box-shadow:0 2px 7px rgba(0,0,0,0.22)"></div>
<svg class="abs" style="left:1724px;top:214px" width="27" height="45"><path d="M2.6 14.4 L10.6 22.2 L2.6 30 M8.8 14.4 L16.8 22.2 L8.8 30" fill="none" stroke="#c2c2c2" stroke-width="1.3"/></svg>
<div class="abs" style="left:1736px;top:660px;width:53px;height:18px;border-radius:9px;background:#8fd400"></div>
<div class="t" style="left:1740px;top:657px;font-size:19px;font-weight:bold;line-height:24px;color:#fff;letter-spacing:-0.4px;-webkit-text-stroke:0.5px #fff">2023</div>
</body></html>
